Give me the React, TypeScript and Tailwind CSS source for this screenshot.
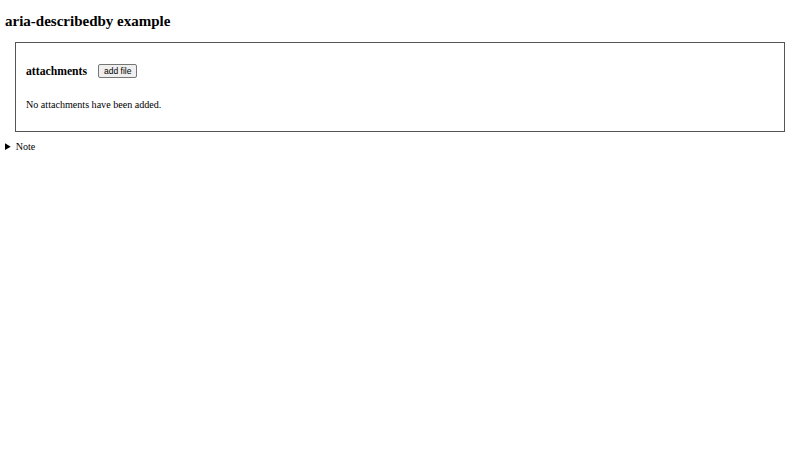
export default function App() {
  return (
    <div
      className="min-h-[450px] w-[800px] bg-white px-[5px] pt-[12px] text-black"
      style={{ fontFamily: '"Liberation Serif", serif' }}
    >
      <h2 className="text-[15px] font-bold leading-[18px]">aria-describedby example</h2>

      <div className="mx-[10px] mt-[12px] h-[90px] border border-[#555] px-[10px] pt-[21px]">
        <div className="flex items-center gap-[11px]">
          <h3 className="text-[11.7px] font-bold leading-[15px]">attachments</h3>
          <button
            className="-mt-[2px] h-[14px] rounded-[2px] border border-[#767676] bg-[#efefef] px-[5px] text-[8.5px] leading-[12px]"
            style={{ fontFamily: '"Liberation Sans", Arial, sans-serif' }}
          >
            add file
          </button>
        </div>
        <p className="mt-[19px] text-[10.1px] leading-[13px]">No attachments have been added.</p>
      </div>

      <details className="mt-[8px] text-[10.1px] leading-[13px]">
        <summary className="cursor-pointer">Note</summary>
      </details>
    </div>
  );
}
